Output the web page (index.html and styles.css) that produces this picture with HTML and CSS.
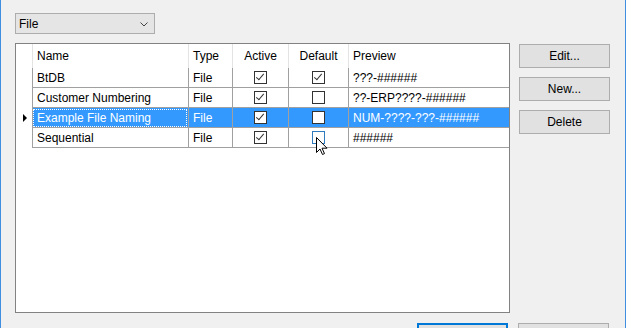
FILE: index.html
```html
<!DOCTYPE html>
<html lang="en">
<head>
    <meta charset="UTF-8">
    <title>Numbering Schemes</title>
    <link rel="stylesheet" href="styles.css">
</head>
<body>
    <div class="window">
        <div class="combo">
            <span>File</span>
            <svg class="chevron" width="8" height="5" viewBox="0 0 8 5"><polyline points="0.5,0.5 4,4 7.5,0.5" fill="none" stroke="#444" stroke-width="1"/></svg>
        </div>

        <div class="main">
            <div class="grid">
                <div class="row head">
                    <div class="cell rh"></div>
                    <div class="cell">Name</div>
                    <div class="cell">Type</div>
                    <div class="cell center">Active</div>
                    <div class="cell center">Default</div>
                    <div class="cell">Preview</div>
                </div>
                <div class="row">
                    <div class="cell rh"></div>
                    <div class="cell">BtDB</div>
                    <div class="cell">File</div>
                    <div class="cell center"><span class="cb checked"></span></div>
                    <div class="cell center"><span class="cb checked"></span></div>
                    <div class="cell">???-######</div>
                </div>
                <div class="row">
                    <div class="cell rh"></div>
                    <div class="cell">Customer Numbering</div>
                    <div class="cell">File</div>
                    <div class="cell center"><span class="cb checked"></span></div>
                    <div class="cell center"><span class="cb"></span></div>
                    <div class="cell">??-ERP????-######</div>
                </div>
                <div class="row selected">
                    <div class="cell rh"><span class="arrow"></span></div>
                    <div class="cell focus">Example File Naming</div>
                    <div class="cell">File</div>
                    <div class="cell center"><span class="cb checked"></span></div>
                    <div class="cell center"><span class="cb"></span></div>
                    <div class="cell">NUM-????-???-######</div>
                </div>
                <div class="row">
                    <div class="cell rh"></div>
                    <div class="cell">Sequential</div>
                    <div class="cell">File</div>
                    <div class="cell center"><span class="cb checked"></span></div>
                    <div class="cell center"><span class="cb hover"></span></div>
                    <div class="cell">######</div>
                </div>

                <!-- mouse pointer over the Default checkbox -->
                <svg class="pointer" width="12" height="19" viewBox="0 0 12 19">
                    <path d="M0.5 0.5 L0.5 15.5 L4 12 L6.5 17.5 L8.5 16.6 L6 11.2 L11 11.2 Z" fill="#fff" stroke="#000" stroke-width="1" stroke-linejoin="round"/>
                </svg>
            </div>

            <div class="side">
                <button>Edit...</button>
                <button>New...</button>
                <button>Delete</button>
            </div>
        </div>

        <!-- dialog buttons, only their top edge is in view -->
        <div class="footer">
            <button class="primary" aria-label="OK"></button>
            <button aria-label="Cancel"></button>
        </div>
    </div>
</body>
</html>
```

FILE: styles.css
```css
body {
    margin: 0;
    font-family: "Liberation Sans", Arial, sans-serif;
    font-size: 12px;
    color: #000;
    background: #f0f0f0;
}
.window {
    width: 626px;
    height: 328px;
    box-sizing: border-box;
    padding: 13px 15px 0 14px;
    background: #f0f0f0;
    border-left: 1px solid #3f8ee0;
    border-right: 1px solid #3f8ee0;
    overflow: hidden;
}
.combo {
    width: 140px;
    height: 21px;
    box-sizing: border-box;
    border: 1px solid #adadad;
    background: #e5e5e5;
    display: flex;
    align-items: center;
    justify-content: space-between;
    padding: 0 6px 0 3px;
}
.chevron {
    margin-top: 1px;
}
.main {
    display: flex;
    gap: 9px;
    margin-top: 9px;
}
.grid {
    position: relative;
    width: 496px;
    height: 270px;
    box-sizing: border-box;
    border: 1px solid #828282;
    background: #fff;
}
.row {
    display: grid;
    grid-template-columns: 16px 156px 44px 56px 60px 1fr;
    height: 20px;
}
.row.head {
    height: 24px;
}
.cell {
    box-sizing: border-box;
    display: flex;
    align-items: center;
    padding-left: 4px;
    white-space: nowrap;
    border-left: 1px solid #a0a0a0;
    border-bottom: 1px solid #a0a0a0;
}
.cell.rh {
    border: none;
    padding: 0;
    justify-content: center;
}
.head .cell {
    border-bottom: none;
    border-left-color: #e3e3e3;
}
.cell.center {
    justify-content: center;
    padding-left: 0;
}
.selected .cell:not(.rh) {
    background: #3399ff;
    color: #fff;
}
.cell.focus {
    outline: 1px dotted #fff;
    outline-offset: -2px;
}
.arrow {
    width: 0;
    height: 0;
    border-top: 4px solid transparent;
    border-bottom: 4px solid transparent;
    border-left: 4px solid #000;
    margin-left: 2px;
}
.cb {
    position: relative;
    width: 13px;
    height: 13px;
    box-sizing: border-box;
    border: 1px solid #333;
    background: #fff;
}
.cb.checked::after {
    content: "";
    position: absolute;
    left: 3px;
    top: 0px;
    width: 3px;
    height: 7px;
    border-right: 1px solid #333;
    border-bottom: 1px solid #333;
    transform: rotate(40deg);
}
.cb.hover {
    border-color: #2f7bbd;
}
.pointer {
    position: absolute;
    left: 300px;
    top: 93px;
}
.side {
    display: flex;
    flex-direction: column;
    gap: 9px;
    padding-top: 1px;
}
button {
    width: 91px;
    height: 24px;
    box-sizing: border-box;
    border: 1px solid #adadad;
    background: #e1e1e1;
    font-family: inherit;
    font-size: 12px;
    color: #000;
    padding: 0;
}
.footer {
    display: flex;
    justify-content: flex-end;
    gap: 10px;
    margin-top: 10px;
    padding-right: 1px;
}
button.primary {
    border: 1px solid #0078d7;
    box-shadow: inset 0 0 0 1px #0078d7;
}
```
